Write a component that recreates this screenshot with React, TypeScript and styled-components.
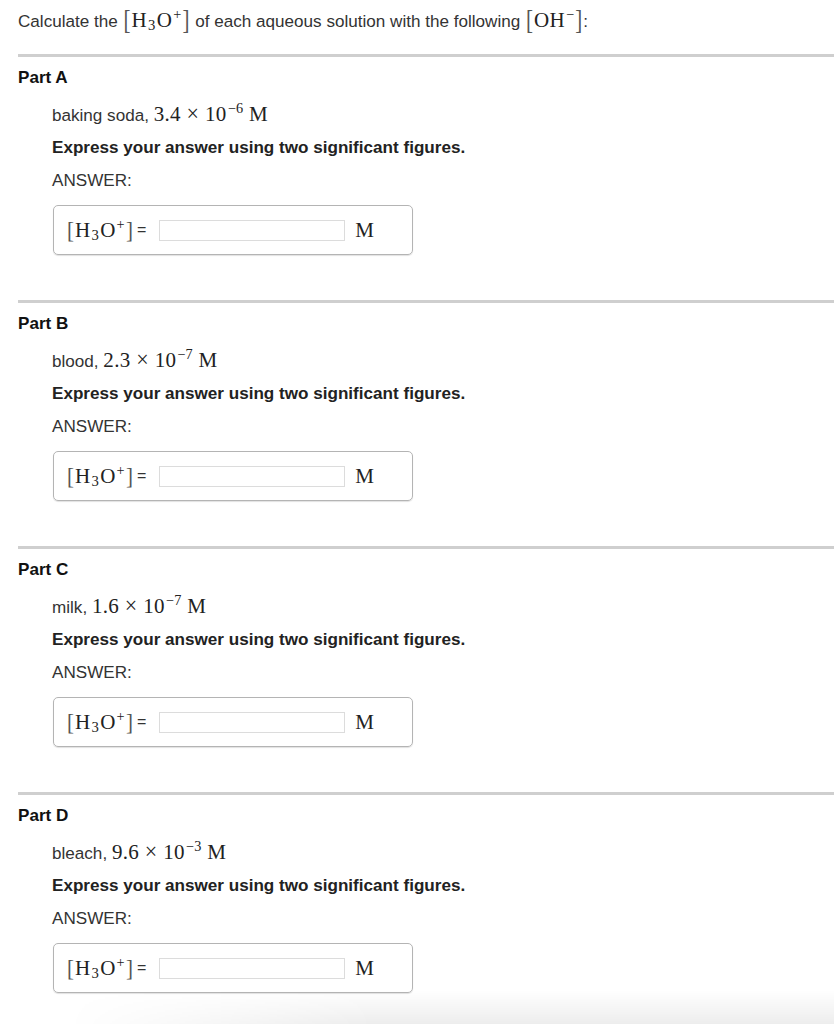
import React from "react";
import styled, { createGlobalStyle } from "styled-components";

const GlobalStyle = createGlobalStyle`
  html, body {
    margin: 0;
    padding: 0;
    background: #ffffff;
  }
  body {
    font-family: "Liberation Sans", Arial, Helvetica, sans-serif;
    color: #222;
  }
`;

const Page = styled.div`
  padding: 10px 0 20px 18px;
  box-sizing: border-box;
`;

const Title = styled.div`
  font-size: 17.1px;
  line-height: 24px;
  height: 24px;
  color: #333;
  margin-bottom: 20px;
`;

const Section = styled.section`
  border-top: 3px solid #cfcfcf;
  padding: 11px 0 45px;
`;

const PartHeading = styled.h2`
  margin: 0;
  font-size: 17.1px;
  line-height: 20px;
  font-weight: 700;
  color: #111;
`;

const PartBody = styled.div`
  padding-left: 34px;
  display: flex;
  flex-direction: column;
  align-items: flex-start;
`;

const Prompt = styled.div`
  margin-top: 15px;
  font-size: 17.1px;
  line-height: 24px;
  height: 24px;
  color: #333;
`;

const Instruction = styled.div`
  margin-top: 9px;
  font-size: 17.1px;
  line-height: 24px;
  font-weight: 700;
  color: #222;
`;

const AnswerLabel = styled.div`
  margin-top: 9px;
  font-size: 17.1px;
  line-height: 24px;
  color: #333;
`;

const AnswerBox = styled.div`
  margin-top: 12px;
  margin-left: 1px;
  width: 360px;
  height: 50px;
  box-sizing: border-box;
  border: 1px solid #b4b4b4;
  border-radius: 5px;
  box-shadow: 0 1px 1px rgba(0, 0, 0, 0.12);
  display: flex;
  align-items: center;
  padding-left: 12px;
`;

const AnswerInput = styled.input`
  margin-left: 13px;
  width: 186px;
  height: 21px;
  box-sizing: border-box;
  border: 1px solid #dcdcdc;
  border-radius: 0;
  outline: none;
  padding: 0 4px;
  background: #fff;
`;

const Unit = styled.span`
  margin-left: 10px;
`;

const Math = styled.span`
  font-family: "Liberation Serif", "Times New Roman", serif;
  font-size: 21px;
  line-height: 1;
  color: #222;
  white-space: nowrap;
  letter-spacing: 0.3px;
`;

const Bracket = styled.span<{ $big?: boolean }>`
  display: inline-block;
  font-weight: 300;
  color: #555;
  letter-spacing: 0;
  transform: ${(p) => (p.$big ? "scaleY(1.25)" : "scaleY(1.08)")};
  margin: 0 1px;
`;

const Sub = styled.span`
  font-size: 0.7em;
  vertical-align: -0.22em;
  line-height: 0;
  margin: 0 1px 0 1px;
`;

const Sup = styled.span`
  font-size: 0.68em;
  vertical-align: 0.55em;
  line-height: 0;
  margin-left: 1px;
`;

const Times = styled.span`
  margin: 0 0.26em;
  font-size: 1.05em;
`;

const Eq = styled.span`
  font-family: "Liberation Sans", Arial, sans-serif;
  font-size: 16px;
  margin-left: 3px;
  color: #333;
`;

const Footer = styled.div`
  position: fixed;
  left: 0;
  right: 0;
  bottom: 0;
  height: 34px;
  pointer-events: none;
  background: linear-gradient(to bottom, rgba(0, 0, 0, 0), rgba(0, 0, 0, 0.07));
  -webkit-mask-image: linear-gradient(to right, transparent 8%, black 45%);
  mask-image: linear-gradient(to right, transparent 8%, black 45%);
`;

const H3O = ({ big }: { big?: boolean }) => (
  <>
    <Bracket $big={big}>[</Bracket>H<Sub>3</Sub>O<Sup>+</Sup>
    <Bracket $big={big}>]</Bracket>
  </>
);

const parts = [
  { label: "Part A", name: "baking soda", coef: "3.4", exp: "−6" },
  { label: "Part B", name: "blood", coef: "2.3", exp: "−7" },
  { label: "Part C", name: "milk", coef: "1.6", exp: "−7" },
  { label: "Part D", name: "bleach", coef: "9.6", exp: "−3" },
];

export default function App() {
  return (
    <>
      <GlobalStyle />
      <Page>
        <Title>
          Calculate the{" "}
          <Math>
            <H3O big />
          </Math>{" "}
          of each aqueous solution with the following{" "}
          <Math>
            <Bracket $big>[</Bracket>OH<Sup>−</Sup>
            <Bracket $big>]</Bracket>
          </Math>
          :
        </Title>
        {parts.map((p) => (
          <Section key={p.label}>
            <PartHeading>{p.label}</PartHeading>
            <PartBody>
              <Prompt>
                {p.name},{" "}
                <Math>
                  {p.coef}
                  <Times>×</Times>10<Sup>{p.exp}</Sup> M
                </Math>
              </Prompt>
              <Instruction>Express your answer using two significant figures.</Instruction>
              <AnswerLabel>ANSWER:</AnswerLabel>
              <AnswerBox>
                <Math>
                  <H3O />
                </Math>
                <Eq>=</Eq>
                <AnswerInput type="text" aria-label={`${p.label} answer`} />
                <Unit>
                  <Math>M</Math>
                </Unit>
              </AnswerBox>
            </PartBody>
          </Section>
        ))}
      </Page>
      <Footer />
    </>
  );
}
